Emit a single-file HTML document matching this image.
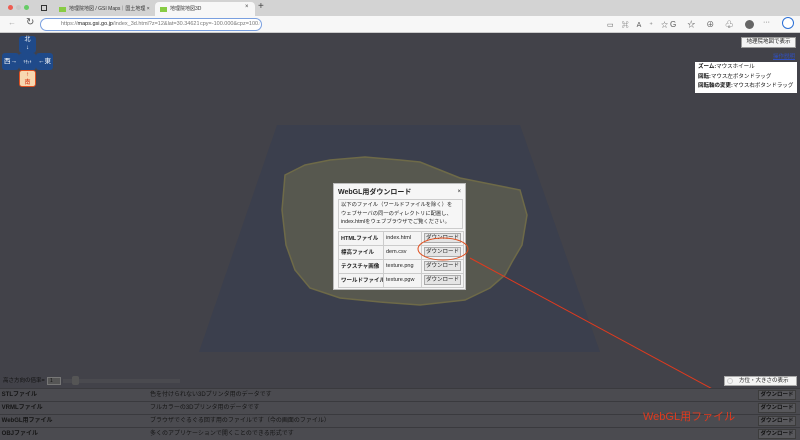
<!DOCTYPE html>
<html><head><meta charset="utf-8"><style>
*{box-sizing:border-box;margin:0;padding:0}
body{width:800px;height:440px;overflow:hidden;background:#424249;font-family:"Liberation Sans","Noto Sans CJK JP",sans-serif;position:relative}
.a{position:absolute}
.dir{position:absolute;width:17px;height:17px;background:#1f4a8a;border-radius:3px;color:#fff;font-size:6px;text-align:center;line-height:8px}
.row{position:absolute;left:0;width:800px;height:13px;background:#4b4b50;border-top:1px solid #3a3a3e;font-size:6px;color:#151515;font-weight:bold;line-height:12px}
.row span{position:absolute;left:150px;font-weight:normal}
.dl{position:absolute;left:758px;top:1px;width:38px;height:10px;background:#58585c;border:1px solid #3c3c3c;font-size:5.5px;line-height:8px;text-align:center;color:#111}
table{border-collapse:collapse;width:125px;margin-top:2px;table-layout:fixed}
td{border:1px solid #ccc;font-size:5.5px;padding:0 2px;height:14px;color:#222;background:#f4f4f4;white-space:nowrap;overflow:hidden}
.b{display:block;background:#e4e4e4;border:1px solid #aaa;height:10px;line-height:8px;text-align:center;font-size:5.5px}
</style></head><body>

<div class="a" style="left:0;top:0;width:800px;height:16px;background:#d3d3d3"></div>
<div class="a" style="left:8px;top:5px;width:5px;height:5px;border-radius:50%;background:#ee5b50"></div>
<div class="a" style="left:16px;top:5px;width:5px;height:5px;border-radius:50%;background:#c8c8c8"></div>
<div class="a" style="left:24px;top:5px;width:5px;height:5px;border-radius:50%;background:#6c6"></div>
<div class="a" style="left:41px;top:5px;width:6px;height:6px;border:1px solid #333"></div>
<div class="a" style="left:57px;top:3px;width:95px;height:13px;font-size:5px;line-height:13px;color:#333;padding-left:12px;white-space:nowrap;overflow:hidden">地理院地図 / GSI Maps｜国土地理 ×</div>
<div class="a" style="left:59px;top:7px;width:7px;height:5px;background:#8c4"></div>
<div class="a" style="left:155px;top:2px;width:100px;height:15px;background:#f7f7f7;border-radius:4px 4px 0 0;font-size:5px;line-height:14px;color:#333;padding-left:15px">地理院地図3D</div>
<div class="a" style="left:160px;top:7px;width:7px;height:5px;background:#8c4"></div>
<div class="a" style="left:245px;top:4px;font-size:6px;color:#444">×</div>
<div class="a" style="left:258px;top:1px;font-size:10px;color:#444">+</div>

<div class="a" style="left:0;top:16px;width:800px;height:17px;background:#f7f7f7;border-bottom:1px solid #ccc"></div>
<div class="a" style="left:8px;top:18px;font-size:8px;color:#aaa">←</div>
<div class="a" style="left:26px;top:17px;font-size:10px;color:#555">↻</div>
<div class="a" style="left:40px;top:18px;width:222px;height:13px;border:1px solid #7aa0e0;border-radius:7px;background:#fff"></div>
<div class="a" style="left:61px;top:18px;width:138px;height:13px;font-size:5.5px;line-height:13px;color:#777;white-space:nowrap;overflow:hidden">https://<span style="color:#222">maps.gsi.go.jp</span>/index_3d.html?z=12&amp;lat=30.346213303695375&amp;lon=130.52066802978516&amp;pxsize=1024&amp;ls=std#&amp;cpx=0.000</div>
<div class="a" style="left:200px;top:18px;width:60px;height:13px;font-size:5.5px;line-height:13px;color:#777;white-space:nowrap;overflow:hidden">cpy=-100.000&amp;cpz=100.000&amp;cu...</div>
<div class="a" style="left:607px;top:20px;font-size:7px;color:#555;letter-spacing:8px">▭⌘A⁺☆</div>
<div class="a" style="left:670px;top:19px;font-size:8px;color:#555;letter-spacing:11px">G☆⊕♧</div>
<div class="a" style="left:745px;top:20px;width:9px;height:9px;border-radius:50%;background:#666"></div>
<div class="a" style="left:763px;top:19px;font-size:7px;color:#555">···</div>
<div class="a" style="left:782px;top:17px;width:12px;height:12px;border-radius:50%;border:1.5px solid #2a6fd6;background:#fff"></div>

<svg class="a" style="left:0;top:0" width="800" height="440">
<polygon points="277,125 520,125 600,352 199,352" fill="#3b3f4d"/>
<polygon points="285,175 305,165 330,160 365,157 400,160 420,162 440,170 460,178 495,185 520,190 527,215 522,245 512,262 505,275 490,288 465,300 420,305 380,302 340,298 310,288 295,270 286,245 282,210" fill="#57584f" stroke="#6e6a48" stroke-width="1.5"/>
<line x1="470" y1="258" x2="755" y2="412" stroke="#e03a1e" stroke-width="1"/>
</svg>

<div class="dir" style="left:19px;top:36px">北<br>↓</div>
<div class="dir" style="left:2px;top:53px;line-height:17px;font-size:6.5px">西→</div>
<div class="dir" style="left:19px;top:53px;line-height:17px;font-size:4px">ﾘｾｯﾄ</div>
<div class="dir" style="left:36px;top:53px;line-height:17px;font-size:6.5px">←東</div>
<div class="dir" style="left:19px;top:70px;background:#f8d8b0;border:1px solid #e05020;color:#d02000">↑<br>南</div>

<div class="a" style="left:741px;top:37px;width:55px;height:11px;background:#f4f4f4;border:1px solid #999;font-size:5.5px;line-height:9px;text-align:center;color:#222">地理院地図で表示</div>
<div class="a" style="left:773px;top:52px;font-size:5.5px;color:#3050c0;text-decoration:underline">操作説明</div>
<div class="a" style="left:695px;top:62px;width:102px;height:31px;background:#fff;font-size:5.5px;line-height:9.5px;color:#111;padding:1px 3px;white-space:nowrap">
<b>ズーム:</b>マウスホイール<br><b>回転:</b>マウス左ボタンドラッグ<br><b>回転軸の変更:</b>マウス右ボタンドラッグ</div>

<div class="a" style="left:333px;top:183px;width:133px;height:107px;background:#f6f6f6;border:1px solid #bbb;padding:3px 4px">
<div style="font-size:7px;font-weight:bold;color:#222;height:11px;line-height:11px">WebGL用ダウンロード<span style="float:right;font-size:6px;font-weight:normal">×</span></div>
<div style="border:1px solid #ccc;font-size:5.3px;line-height:8.5px;padding:1px 2px;color:#222;margin-top:1px;white-space:nowrap;overflow:hidden;width:125px">以下のファイル（ワールドファイルを除く）を<br>ウェブサーバの同一のディレクトリに配置し、<br>index.htmlをウェブブラウザでご覧ください。</div>
<table>
<colgroup><col style="width:45px"><col style="width:38px"><col style="width:42px"></colgroup>
<tr><td><b>HTMLファイル</b></td><td>index.html</td><td><span class="b">ダウンロード</span></td></tr>
<tr><td><b>標高ファイル</b></td><td>dem.csv</td><td><span class="b">ダウンロード</span></td></tr>
<tr><td><b>テクスチャ画像</b></td><td>texture.png</td><td><span class="b">ダウンロード</span></td></tr>
<tr><td><b>ワールドファイル</b></td><td>texture.pgw</td><td><span class="b">ダウンロード</span></td></tr>
</table>
</div>
<svg class="a" style="left:0;top:0;pointer-events:none" width="800" height="440">
<ellipse cx="443" cy="249" rx="25" ry="11" fill="none" stroke="#e05020" stroke-width="1"/>
<ellipse cx="778" cy="418" rx="22" ry="7" fill="none" stroke="#e03a1e" stroke-width="1"/>
</svg>

<div class="a" style="left:0;top:376px;width:800px;height:11px;font-size:5.5px;color:#111;padding-left:3px;line-height:11px">高さ方向の倍率=</div>
<div class="a" style="left:47px;top:377px;width:14px;height:8px;background:#555;border:1px solid #777;font-size:5px;line-height:6px;color:#111;padding-left:2px">1</div>
<div class="a" style="left:63px;top:379px;width:117px;height:4px;background:#4a4a4f"></div>
<div class="a" style="left:72px;top:376px;width:7px;height:9px;background:#555;border-radius:2px"></div>
<div class="a" style="left:724px;top:376px;width:73px;height:10px;background:#f4f4f4;border:1px solid #aaa;font-size:5.5px;line-height:8px;color:#222;padding-left:14px">方位・大きさの表示</div>
<div class="a" style="left:727px;top:378px;width:6px;height:6px;border-radius:50%;border:1px solid #ccc"></div>

<div class="row" style="top:388px">&nbsp;STLファイル<span>色を付けられない3Dプリンタ用のデータです</span><div class="dl">ダウンロード</div></div>
<div class="row" style="top:401px">&nbsp;VRMLファイル<span>フルカラーの3Dプリンタ用のデータです</span><div class="dl">ダウンロード</div></div>
<div class="row" style="top:414px">&nbsp;WebGL用ファイル<span>ブラウザでぐるぐる回す用のファイルです（今の画面のファイル）</span><div class="dl">ダウンロード</div></div>
<div class="row" style="top:427px">&nbsp;OBJファイル<span>多くのアプリケーションで開くことのできる形式です</span><div class="dl">ダウンロード</div></div>

<div class="a" style="left:643px;top:411px;font-size:11px;color:#e03a1e;line-height:13px">WebGL用ファイル</div>
</body></html>
